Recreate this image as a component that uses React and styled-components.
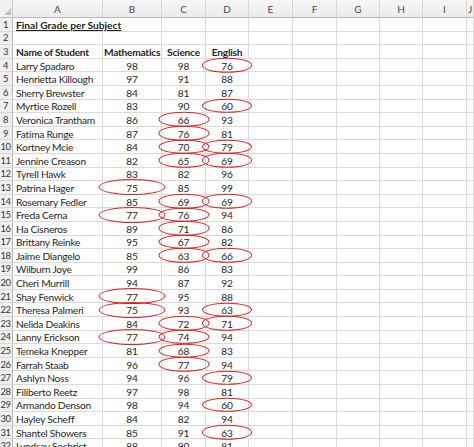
import React from 'react';
import styled, { createGlobalStyle } from 'styled-components';

const GlobalStyle = createGlobalStyle`
  html, body { margin: 0; padding: 0; background: #ffffff; }
  body { width: 474px; height: 447px; overflow: hidden; }
  #root { width: 474px; height: 447px; overflow: hidden; }
`;

const COLS = ['A', 'B', 'C', 'D', 'E', 'F', 'G', 'H', 'I', 'J'];

const STUDENTS = [
  ['Larry Spadaro', 98, 98, 76],
  ['Henrietta Killough', 97, 91, 88],
  ['Sherry Brewster', 84, 81, 87],
  ['Myrtice Rozell', 83, 90, 60],
  ['Veronica Trantham', 86, 66, 93],
  ['Fatima Runge', 87, 76, 81],
  ['Kortney Mcie', 84, 70, 79],
  ['Jennine Creason', 82, 65, 69],
  ['Tyrell Hawk', 83, 82, 96],
  ['Patrina Hager', 75, 85, 99],
  ['Rosemary Fedler', 85, 69, 69],
  ['Freda Cerna', 77, 76, 94],
  ['Ha Cisneros', 89, 71, 86],
  ['Brittany Reinke', 95, 67, 82],
  ['Jaime Diangelo', 85, 63, 66],
  ['Wilburn Joye', 99, 86, 83],
  ['Cheri Murrill', 94, 87, 92],
  ['Shay Fenwick', 77, 95, 88],
  ['Theresa Palmeri', 75, 93, 63],
  ['Nelida Deakins', 84, 72, 71],
  ['Lanny Erickson', 77, 74, 94],
  ['Temeka Knepper', 81, 68, 83],
  ['Farrah Staab', 96, 77, 94],
  ['Ashlyn Noss', 94, 96, 79],
  ['Filiberto Reetz', 97, 98, 81],
  ['Armando Denson', 98, 94, 60],
  ['Hayley Scheff', 84, 82, 94],
  ['Shantel Showers', 85, 91, 63],
  ['Lyndsay Sochrict', 88, 90, 81],
];

const RING = {
  B: { w: 67, h: 16 },
  C: { w: 51, h: 14.5 },
  D: { w: 50, h: 14.5 },
};

const Sheet = styled.div`
  display: grid;
  grid-template-columns: 13px 90px 59px 44px 43px 44px 44px 43px 43px 44px 1fr;
  grid-template-rows: 18px;
  grid-auto-rows: 13.6px;
  width: 474px;
  height: 447px;
  overflow: hidden;
  font-family: Lato, "Open Sans", sans-serif;
  font-size: 10.2px;
  color: #1f1f1f;
`;

const Corner = styled.div`
  box-sizing: border-box;
  display: flex;
  align-items: flex-end;
  justify-content: flex-end;
  padding: 0 1px 2px 0;
  background: #f1f1f1;
  border-right: 1px solid #c9c9c9;
  border-bottom: 1px solid #b9b9b9;
`;

const CornerMark = styled.span`
  width: 0;
  height: 0;
  border-left: 7px solid transparent;
  border-bottom: 7px solid #c4c4c4;
`;

const ColHead = styled.div`
  box-sizing: border-box;
  display: flex;
  align-items: center;
  justify-content: center;
  background: linear-gradient(#f6f6f6, #ececec);
  border-right: 1px solid #d6d6d6;
  border-bottom: 1px solid #b9b9b9;
  color: #4a4a4a;
  font-size: 10px;
  padding-top: 1px;
`;

const RowHead = styled.div`
  box-sizing: border-box;
  display: flex;
  align-items: center;
  justify-content: center;
  padding-right: 1px;
  background: #efefef;
  border-right: 1px solid #b9b9b9;
  border-bottom: 1px solid #d9d9d9;
  color: #333333;
  font-size: 9.4px;
  letter-spacing: -0.4px;
  white-space: nowrap;
`;

const Cell = styled.div`
  box-sizing: border-box;
  position: relative;
  display: flex;
  align-items: center;
  justify-content: ${(p) => (p.$align === 'center' ? 'center' : 'flex-start')};
  padding: 1px 0 0 ${(p) => (p.$align === 'center' ? '0' : '3px')};
  border-right: 1px solid ${(p) => (p.$open ? 'transparent' : '#dadada')};
  border-bottom: 1px solid #dadada;
  font-weight: ${(p) => (p.$bold ? 700 : 400)};
  text-decoration: ${(p) => (p.$underline ? 'underline' : 'none')};
  letter-spacing: ${(p) => (p.$underline ? '0' : '-0.25px')};
  white-space: nowrap;
  overflow: visible;
`;

const Ring = styled.span`
  position: absolute;
  left: 50%;
  top: 50%;
  z-index: 1;
  box-sizing: border-box;
  width: ${(p) => p.$w}px;
  height: ${(p) => p.$h}px;
  transform: translate(-50%, -50%);
  border: 1.5px solid #d92525;
  border-radius: 50%;
  pointer-events: none;
`;

function cellContent(row, col) {
  if (row === 1 && col === 'A') return { text: 'Final Grade per Subject', bold: true, underline: true, open: true };
  if (row === 3) {
    if (col === 'A') return { text: 'Name of Student', bold: true };
    if (col === 'B') return { text: 'Mathematics', bold: true, align: 'center' };
    if (col === 'C') return { text: 'Science', bold: true, align: 'center' };
    if (col === 'D') return { text: 'English', bold: true, align: 'center' };
  }
  if (row >= 4) {
    const s = STUDENTS[row - 4];
    if (!s) return null;
    if (col === 'A') return { text: s[0] };
    const idx = { B: 1, C: 2, D: 3 }[col];
    if (idx) return { text: String(s[idx]), align: 'center', ring: s[idx] < 80 };
  }
  return null;
}

export default function App() {
  const rows = Array.from({ length: 32 }, (_, i) => i + 1);
  return (
    <>
      <GlobalStyle />
      <Sheet>
        <Corner>
          <CornerMark />
        </Corner>
        {COLS.map((c) => (
          <ColHead key={c}>{c}</ColHead>
        ))}
        {rows.map((r) => (
          <React.Fragment key={r}>
            <RowHead>{r}</RowHead>
            {COLS.map((c) => {
              const info = cellContent(r, c);
              return (
                <Cell
                  key={c}
                  $align={info?.align}
                  $bold={info?.bold}
                  $underline={info?.underline}
                  $open={info?.open}
                >
                  {info?.text}
                  {info?.ring && <Ring $w={RING[c].w} $h={RING[c].h} />}
                </Cell>
              );
            })}
          </React.Fragment>
        ))}
      </Sheet>
    </>
  );
}
